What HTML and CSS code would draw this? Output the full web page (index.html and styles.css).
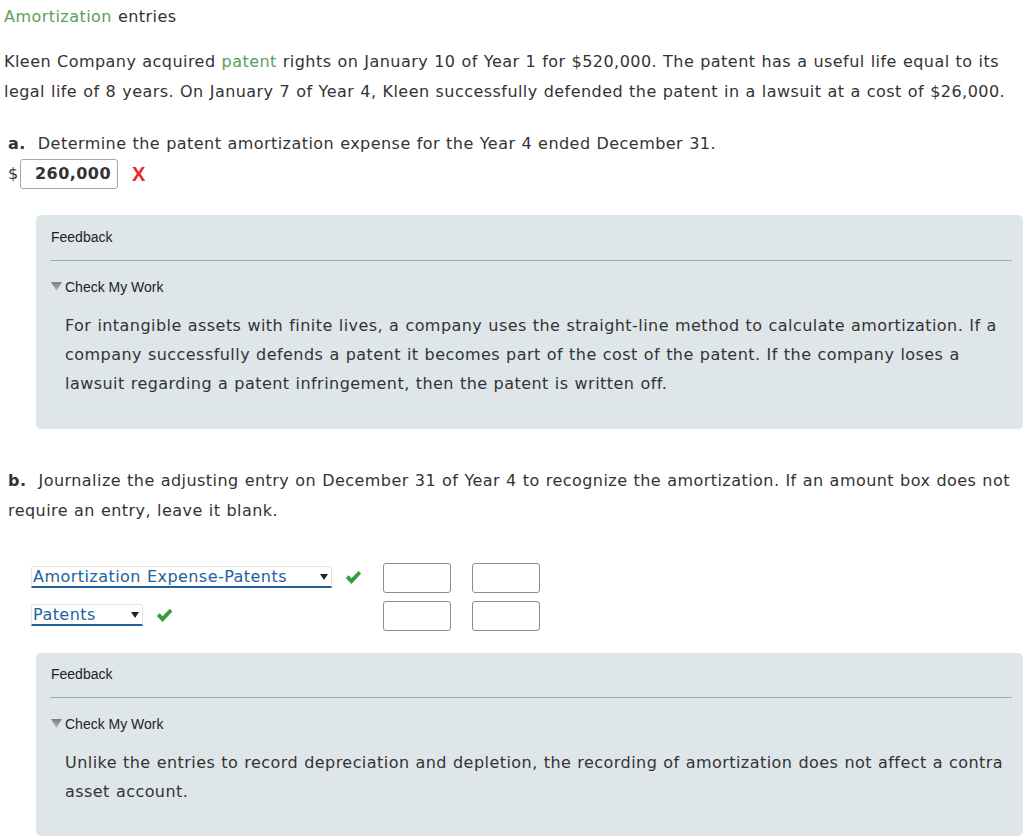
FILE: index.html
```html
<!DOCTYPE html>
<html>
<head>
<meta charset="utf-8">
<link rel="stylesheet" href="styles.css">
</head>
<body>
<div class="page">
  <h1 class="title"><span class="green">Amortization</span> entries</h1>
  <p class="intro">Kleen Company acquired <span class="green">patent</span> rights on January 10 of Year 1 for $520,000. The patent has a useful life equal to its legal life of 8 years. On January 7 of Year 4, Kleen successfully defended the patent in a lawsuit at a cost of $26,000.</p>

  <div class="part">
    <p class="question"><b>a.</b>&nbsp; Determine the patent amortization expense for the Year 4 ended December 31.</p>
    <div class="answer-row">
      <span class="dollar">$</span>
      <span class="input filled">260,000</span>
      <span class="wrong">X</span>
    </div>
  </div>

  <div class="feedback fb-a">
    <div class="fb-head">Feedback</div>
    <div class="fb-rule"></div>
    <div class="cmw"><svg class="tri" width="11" height="9" viewBox="0 0 11 9"><defs><linearGradient id="g1" x1="0" y1="0" x2="0" y2="1"><stop offset="0" stop-color="#7d7d7d"/><stop offset="1" stop-color="#b5b5b5"/></linearGradient></defs><polygon points="0,0 11,0 5.5,9" fill="url(#g1)"/></svg>Check My Work</div>
    <p class="fb-text">For intangible assets with finite lives, a company uses the straight-line method to calculate amortization. If a company successfully defends a patent it becomes part of the cost of the patent. If the company loses a lawsuit regarding a patent infringement, then the patent is written off.</p>
  </div>

  <div class="part">
    <p class="question qb"><b>b.</b>&nbsp; Journalize the adjusting entry on December 31 of Year 4 to recognize the amortization. If an amount box does not require an entry, leave it blank.</p>
  </div>

  <div class="journal">
    <div class="acct">
      <span class="select w1">Amortization Expense-Patents<span class="arrow"></span></span>
      <svg class="check" width="17" height="15" viewBox="0 0 17 15"><path d="M0.8 8 L3.6 5.2 L6.6 8.2 L13.8 0.8 L16.4 3.4 L6.6 14 Z" fill="#3b9b3b"/></svg>
    </div>
    <span class="box"></span>
    <span class="box"></span>
    <div class="acct">
      <span class="select w2">Patents<span class="arrow"></span></span>
      <svg class="check c2" width="17" height="15" viewBox="0 0 17 15"><path d="M0.8 8 L3.6 5.2 L6.6 8.2 L13.8 0.8 L16.4 3.4 L6.6 14 Z" fill="#3b9b3b"/></svg>
    </div>
    <span class="box"></span>
    <span class="box"></span>
  </div>

  <div class="feedback fb-b">
    <div class="fb-head">Feedback</div>
    <div class="fb-rule"></div>
    <div class="cmw"><svg class="tri" width="11" height="9" viewBox="0 0 11 9"><defs><linearGradient id="g2" x1="0" y1="0" x2="0" y2="1"><stop offset="0" stop-color="#7d7d7d"/><stop offset="1" stop-color="#b5b5b5"/></linearGradient></defs><polygon points="0,0 11,0 5.5,9" fill="url(#g2)"/></svg>Check My Work</div>
    <p class="fb-text">Unlike the entries to record depreciation and depletion, the recording of amortization does not affect a contra asset account.</p>
  </div>
</div>
</body>
</html>
```

FILE: styles.css
```css
html, body {
  margin: 0;
  padding: 0;
  background: #ffffff;
}

body {
  font-family: "DejaVu Sans", Verdana, sans-serif;
  font-size: 16px;
  color: #333333;
}

.page {
  padding: 0 4px;
}

.title,
.intro,
.question,
.fb-text,
.select,
.filled {
  letter-spacing: 0.45px;
  word-spacing: 0.5px;
}

.title {
  margin: 7px 0 0 0;
  font-size: 16px;
  font-weight: normal;
  line-height: 20px;
}

.green {
  color: #5d9e5d;
}

.intro {
  margin: 20px 0 0 0;
  line-height: 30px;
}

.part {
  padding-left: 4px;
}

.question {
  margin: 22px 0 0 0;
  line-height: 30px;
}

.question b {
  font-weight: bold;
}

.answer-row {
  display: flex;
  align-items: center;
  height: 30px;
}

.dollar {
  width: 12px;
  line-height: 20px;
}

.input {
  box-sizing: border-box;
  display: inline-block;
  height: 30px;
  border: 1px solid #a6a6a6;
  border-radius: 3px;
  background: #fff;
}

.filled {
  width: 98px;
  padding-right: 6px;
  text-align: right;
  font-weight: bold;
  line-height: 28px;
  color: #333;
}

.wrong {
  margin-left: 14px;
  font-family: "Liberation Sans", Arial, sans-serif;
  font-weight: bold;
  font-size: 20px;
  color: #e8262a;
  line-height: 20px;
}

.feedback {
  margin-left: 32px;
  margin-right: -3px;
  background: #dfe6e9;
  border-radius: 5px;
  padding: 0 11px 30px 14px;
}

.fb-a {
  margin-top: 26px;
  padding-top: 14px;
  padding-bottom: 31px;
}

.fb-b {
  margin-top: 22px;
  padding-top: 13px;
}

.fb-head,
.cmw {
  font-family: "Liberation Sans", Arial, sans-serif;
  font-size: 14px;
  line-height: 16px;
  color: #222;
  padding-left: 1px;
}

.fb-rule {
  margin-top: 15px;
  height: 1px;
  background: #a2aaad;
}

.cmw {
  margin-top: 18px;
  display: flex;
  align-items: center;
}

.tri {
  margin-right: 3px;
  margin-top: -2px;
}

.fb-text {
  margin: 16px 0 0 15px;
  line-height: 29px;
  color: #333;
}

.qb {
  margin-top: 37px;
}

.journal {
  margin: 37px 0 0 27px;
  display: grid;
  grid-template-columns: 331px 68px 68px;
  column-gap: 21px;
  row-gap: 8px;
  align-items: center;
}

.acct {
  display: flex;
  align-items: center;
  height: 30px;
}

.select {
  position: relative;
  box-sizing: border-box;
  display: inline-block;
  height: 22px;
  margin-top: -3px;
  padding-left: 1px;
  border: 1px solid #e2e2e2;
  border-bottom: 2px solid #23609a;
  border-radius: 3px 3px 0 0;
  color: #1d62a0;
  line-height: 19px;
  background: #fff;
}

.w1 {
  width: 306px;
}

.w2 {
  width: 112px;
}

.arrow {
  position: absolute;
  right: 3px;
  top: 7px;
  width: 0;
  height: 0;
  border-left: 4px solid transparent;
  border-right: 4px solid transparent;
  border-top: 6px solid #222;
}

.check {
  margin-left: 13px;
  margin-top: -2px;
}

.c2 {
  margin-left: 13px;
}

.box {
  box-sizing: border-box;
  display: block;
  width: 68px;
  height: 30px;
  border: 1px solid #8c8c8c;
  border-radius: 3px;
  background: #fff;
}
```
